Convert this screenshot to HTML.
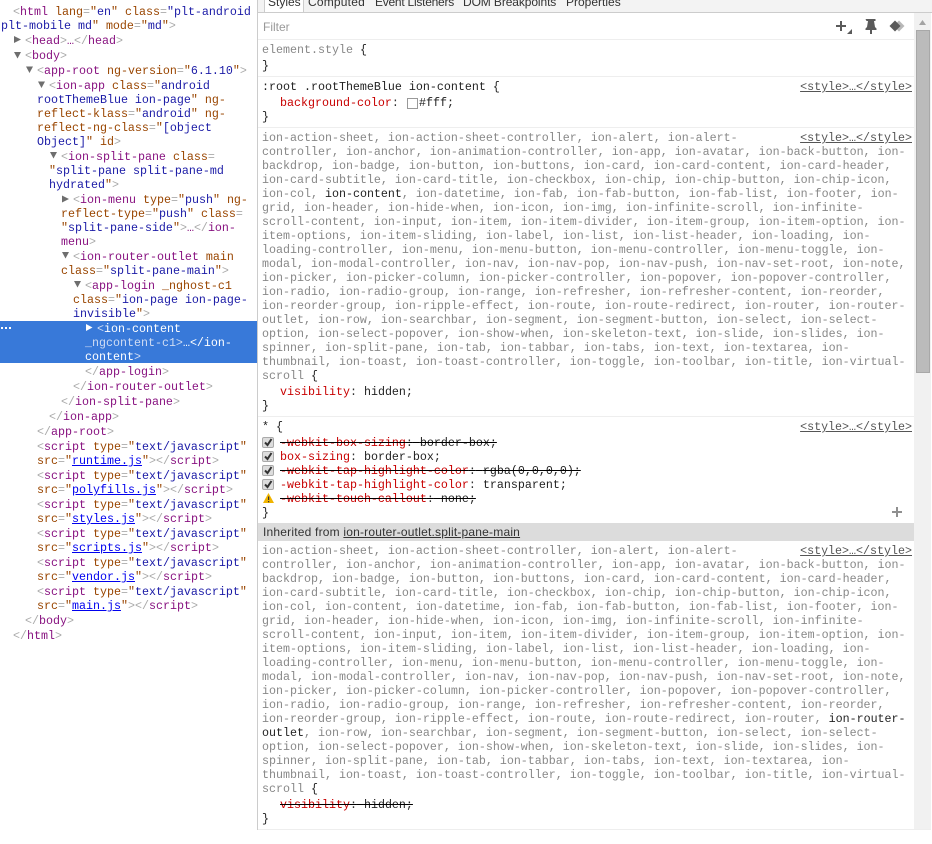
<!DOCTYPE html>
<html lang="en">
<head>
<meta charset="utf-8">
<title>DevTools</title>
<style>
html,body{margin:0;padding:0;background:#fff;}
#r{position:relative;width:932px;height:844px;overflow:hidden;background:#fff;font-family:"Liberation Mono",monospace;font-size:11.667px;line-height:14px;color:#222;}
.l{position:absolute;white-space:pre;height:14px;margin-top:1px;}
.b{position:absolute;}
.t{color:#881280}.g{color:#aaa}.a{color:#994500}.v{color:#1a1aa6}.u{color:#00e;text-decoration:underline}
.s{color:#888}.k{color:#222}.p{color:#c80000}.c{color:#333}
.x{text-decoration:line-through;text-decoration-color:#000}
.src{position:absolute;right:20px;color:#555;text-decoration:underline;white-space:pre;height:14px;margin-top:1px;}
.w,.w .t,.w .g,.w .a,.w .v{color:#fff}
.w .g{color:#cfdcf3}
.tab{position:absolute;top:-6px;font:12px/16px "Liberation Sans",sans-serif;color:#333;white-space:pre;}
.cb{position:absolute;left:262px;width:10px;height:9px;border:1px solid #aaa;border-radius:2px;background:#ddd;}
svg{position:absolute;overflow:visible;}
</style>
</head>
<body>
<div id="r">
<!-- panes -->
<div class="b" style="left:257px;top:0;width:1px;height:830px;background:#ccc"></div>
<div class="b" style="left:0;top:321px;width:257px;height:42px;background:#3879d9"></div>
<!-- tab strip -->
<div class="b" style="left:258px;top:0;width:674px;height:12px;background:#f3f3f3"></div>
<div class="b" style="left:258px;top:12px;width:674px;height:1px;background:#ccc"></div>
<div class="b" style="left:264px;top:0;width:38px;height:12px;background:#fff;border-left:1px solid #ccc;border-right:1px solid #ccc"></div>
<div class="tab" style="left:268px">Styles</div>
<div class="tab" style="left:308px;letter-spacing:.2px">Computed</div>
<div class="tab" style="left:375px;letter-spacing:-.25px">Event Listeners</div>
<div class="tab" style="left:463px;letter-spacing:-.1px">DOM Breakpoints</div>
<div class="tab" style="left:566px">Properties</div>
<!-- scrollbar -->
<div class="b" style="left:914px;top:13px;width:17px;height:816px;background:#f1f1f1"></div>
<div class="b" style="left:916px;top:30px;width:12px;height:341px;background:#bbb;border:1px solid #a8a8a8"></div>
<svg style="left:0;top:0" width="932" height="844"><path d="M919 25l3.500-5 3.500 5z" fill="#a3a3a3"/></svg>
<!-- separators -->
<div class="b" style="left:258px;top:39px;width:656px;height:1px;background:#eee"></div>
<div class="b" style="left:258px;top:76px;width:656px;height:1px;background:#eee"></div>
<div class="b" style="left:258px;top:127px;width:656px;height:1px;background:#eee"></div>
<div class="b" style="left:258px;top:416px;width:656px;height:1px;background:#eee"></div>
<div class="b" style="left:258px;top:523px;width:656px;height:18px;background:#dcdcdc"></div>
<div class="b" style="left:258px;top:829px;width:673px;height:1px;background:#eee"></div>
<!-- filter -->
<div class="b" style="left:263px;top:19px;font:12px/16px 'Liberation Sans',sans-serif;color:#999">Filter</div>
<svg style="left:0;top:0" width="932" height="844">
<path d="M836 25h10v2h-10zM840 21h2v10h-2z" fill="#5a5a5a"/>
<path d="M852 29v5h-5z" fill="#5a5a5a"/>
<path d="M865.500 19h10v2h-1.500l1 6 1.500 1.500v1.500h-4.500v4h-2v-4h-4.500v-1.500l1.500-1.500 1-6h-1.500z" fill="#5a5a5a"/>
<path d="M899 20.500l5.500 5.500-5.500 5.500-5.500-5.500z" fill="#b8b8b8"/>
<path d="M895 20.500l5.500 5.500-5.500 5.500-5.500-5.500z" fill="#5a5a5a"/>
<path d="M892 511h10v2h-10zM896 507h2v10h-2z" fill="#8f8f8f"/>
<path d="M268.500 493l5.500 10h-11z" fill="#f0b400"/>
<path d="M268 496.500h1.200v3.500h-1.200zM268 501h1.200v1.200h-1.200z" fill="#333"/>
</svg>
<!-- DOM tree arrows -->
<svg style="left:0;top:0" width="260" height="640">
<g fill="#6e6e6e">
<path d="M14 36l7 3.500-7 3.500z"/>
<path d="M14 52h7l-3.500 6.500z"/>
<path d="M26 66.500h7l-3.500 6.500z"/>
<path d="M38 81.500h7l-3.500 6.500z"/>
<path d="M50 152h7l-3.500 6.500z"/>
<path d="M62 195.500l7 3.500-7 3.500z"/>
<path d="M62 252h7l-3.500 6.500z"/>
<path d="M74 281h7l-3.500 6.500z"/>
</g>
<path d="M86 324l6.500 3.500-6.500 3.500z" fill="#fff"/>
<path d="M1 327h2v2h-2zM5 327h2v2h-2zM9 327h2v2h-2z" fill="#fff"/>
</svg>
<!-- DOM tree -->
<div class="l" style="left:13px;top:4px"><span class="g">&lt;</span><span class="t">html</span> <span class="a">lang</span><span class="g">=</span><span class="v"><span class="a">"</span>en<span class="a">"</span></span> <span class="a">class</span><span class="g">=</span><span class="v">"plt-android</span></div>
<div class="l" style="left:1px;top:18px"><span class="v">plt-mobile md</span><span class="a">"</span> <span class="a">mode</span><span class="g">=</span><span class="a">"</span><span class="v">md</span><span class="a">"</span><span class="g">&gt;</span></div>
<div class="l" style="left:25px;top:33px"><span class="g">&lt;</span><span class="t">head</span><span class="g">&gt;</span><span class="t">…</span><span class="g">&lt;/</span><span class="t">head</span><span class="g">&gt;</span></div>
<div class="l" style="left:25px;top:48px"><span class="g">&lt;</span><span class="t">body</span><span class="g">&gt;</span></div>
<div class="l" style="left:37px;top:63px"><span class="g">&lt;</span><span class="t">app-root</span> <span class="a">ng-version</span><span class="g">=</span><span class="a">"</span><span class="v">6.1.10</span><span class="a">"</span><span class="g">&gt;</span></div>
<div class="l" style="left:49px;top:78px"><span class="g">&lt;</span><span class="t">ion-app</span> <span class="a">class</span><span class="g">=</span><span class="a">"</span><span class="v">android</span></div>
<div class="l" style="left:37px;top:92px"><span class="v">rootThemeBlue ion-page</span><span class="a">"</span> <span class="a">ng-</span></div>
<div class="l" style="left:37px;top:106px"><span class="a">reflect-klass</span><span class="g">=</span><span class="a">"</span><span class="v">android</span><span class="a">"</span> <span class="a">ng-</span></div>
<div class="l" style="left:37px;top:120px"><span class="a">reflect-ng-class</span><span class="g">=</span><span class="a">"</span><span class="v">[object</span></div>
<div class="l" style="left:37px;top:134px"><span class="v">Object]</span><span class="a">"</span> <span class="a">id</span><span class="g">&gt;</span></div>
<div class="l" style="left:61px;top:149px"><span class="g">&lt;</span><span class="t">ion-split-pane</span> <span class="a">class</span><span class="g">=</span></div>
<div class="l" style="left:49px;top:163px"><span class="a">"</span><span class="v">split-pane split-pane-md</span></div>
<div class="l" style="left:49px;top:177px"><span class="v">hydrated</span><span class="a">"</span><span class="g">&gt;</span></div>
<div class="l" style="left:73px;top:192px"><span class="g">&lt;</span><span class="t">ion-menu</span> <span class="a">type</span><span class="g">=</span><span class="a">"</span><span class="v">push</span><span class="a">"</span> <span class="a">ng-</span></div>
<div class="l" style="left:61px;top:206px"><span class="a">reflect-type</span><span class="g">=</span><span class="a">"</span><span class="v">push</span><span class="a">"</span> <span class="a">class</span><span class="g">=</span></div>
<div class="l" style="left:61px;top:220px"><span class="a">"</span><span class="v">split-pane-side</span><span class="a">"</span><span class="g">&gt;</span><span class="t">…</span><span class="g">&lt;/</span><span class="t">ion-</span></div>
<div class="l" style="left:61px;top:234px"><span class="t">menu</span><span class="g">&gt;</span></div>
<div class="l" style="left:73px;top:249px"><span class="g">&lt;</span><span class="t">ion-router-outlet</span> <span class="a">main</span></div>
<div class="l" style="left:61px;top:263px"><span class="a">class</span><span class="g">=</span><span class="a">"</span><span class="v">split-pane-main</span><span class="a">"</span><span class="g">&gt;</span></div>
<div class="l" style="left:85px;top:278px"><span class="g">&lt;</span><span class="t">app-login</span> <span class="a">_nghost-c1</span></div>
<div class="l" style="left:73px;top:292px"><span class="a">class</span><span class="g">=</span><span class="a">"</span><span class="v">ion-page ion-page-</span></div>
<div class="l" style="left:73px;top:306px"><span class="v">invisible</span><span class="a">"</span><span class="g">&gt;</span></div>
<div class="l w" style="left:97px;top:321px"><span class="g">&lt;</span><span class="t">ion-content</span></div>
<div class="l w" style="left:85px;top:335px"><span class="g">_ngcontent-c1&gt;</span><span class="t">…</span><span class="t">&lt;/ion-</span></div>
<div class="l w" style="left:85px;top:349px"><span class="t">content</span><span class="g">&gt;</span></div>
<div class="l" style="left:85px;top:364px"><span class="g">&lt;/</span><span class="t">app-login</span><span class="g">&gt;</span></div>
<div class="l" style="left:73px;top:379px"><span class="g">&lt;/</span><span class="t">ion-router-outlet</span><span class="g">&gt;</span></div>
<div class="l" style="left:61px;top:394px"><span class="g">&lt;/</span><span class="t">ion-split-pane</span><span class="g">&gt;</span></div>
<div class="l" style="left:49px;top:409px"><span class="g">&lt;/</span><span class="t">ion-app</span><span class="g">&gt;</span></div>
<div class="l" style="left:37px;top:424px"><span class="g">&lt;/</span><span class="t">app-root</span><span class="g">&gt;</span></div>
<div class="l" style="left:37px;top:439px"><span class="g">&lt;</span><span class="t">script</span> <span class="a">type</span><span class="g">=</span><span class="a">"</span><span class="v">text/javascript</span><span class="a">"</span></div>
<div class="l" style="left:37px;top:453px"><span class="a">src</span><span class="g">=</span><span class="a">"</span><span class="u">runtime.js</span><span class="a">"</span><span class="g">&gt;&lt;/</span><span class="t">script</span><span class="g">&gt;</span></div>
<div class="l" style="left:37px;top:468px"><span class="g">&lt;</span><span class="t">script</span> <span class="a">type</span><span class="g">=</span><span class="a">"</span><span class="v">text/javascript</span><span class="a">"</span></div>
<div class="l" style="left:37px;top:482px"><span class="a">src</span><span class="g">=</span><span class="a">"</span><span class="u">polyfills.js</span><span class="a">"</span><span class="g">&gt;&lt;/</span><span class="t">script</span><span class="g">&gt;</span></div>
<div class="l" style="left:37px;top:497px"><span class="g">&lt;</span><span class="t">script</span> <span class="a">type</span><span class="g">=</span><span class="a">"</span><span class="v">text/javascript</span><span class="a">"</span></div>
<div class="l" style="left:37px;top:511px"><span class="a">src</span><span class="g">=</span><span class="a">"</span><span class="u">styles.js</span><span class="a">"</span><span class="g">&gt;&lt;/</span><span class="t">script</span><span class="g">&gt;</span></div>
<div class="l" style="left:37px;top:526px"><span class="g">&lt;</span><span class="t">script</span> <span class="a">type</span><span class="g">=</span><span class="a">"</span><span class="v">text/javascript</span><span class="a">"</span></div>
<div class="l" style="left:37px;top:540px"><span class="a">src</span><span class="g">=</span><span class="a">"</span><span class="u">scripts.js</span><span class="a">"</span><span class="g">&gt;&lt;/</span><span class="t">script</span><span class="g">&gt;</span></div>
<div class="l" style="left:37px;top:555px"><span class="g">&lt;</span><span class="t">script</span> <span class="a">type</span><span class="g">=</span><span class="a">"</span><span class="v">text/javascript</span><span class="a">"</span></div>
<div class="l" style="left:37px;top:569px"><span class="a">src</span><span class="g">=</span><span class="a">"</span><span class="u">vendor.js</span><span class="a">"</span><span class="g">&gt;&lt;/</span><span class="t">script</span><span class="g">&gt;</span></div>
<div class="l" style="left:37px;top:584px"><span class="g">&lt;</span><span class="t">script</span> <span class="a">type</span><span class="g">=</span><span class="a">"</span><span class="v">text/javascript</span><span class="a">"</span></div>
<div class="l" style="left:37px;top:598px"><span class="a">src</span><span class="g">=</span><span class="a">"</span><span class="u">main.js</span><span class="a">"</span><span class="g">&gt;&lt;/</span><span class="t">script</span><span class="g">&gt;</span></div>
<div class="l" style="left:25px;top:613px"><span class="g">&lt;/</span><span class="t">body</span><span class="g">&gt;</span></div>
<div class="l" style="left:13px;top:628px"><span class="g">&lt;/</span><span class="t">html</span><span class="g">&gt;</span></div>
<!-- Styles: element.style -->
<div class="l s" style="left:262px;top:42px">element.style <span class="k">{</span></div>
<div class="l k" style="left:262px;top:58px">}</div>
<!-- :root rule -->
<div class="l k" style="left:262px;top:79px">:root .rootThemeBlue ion-content {</div>
<div class="src" style="top:79px">&lt;style&gt;…&lt;/style&gt;</div>
<div class="l" style="left:280px;top:95px"><span class="p">background-color</span><span class="c">:</span></div>
<div class="b" style="left:407px;top:98px;width:9px;height:9px;border:1px solid #999;background:#fff"></div>
<div class="l k" style="left:419px;top:95px">#fff;</div>
<div class="l k" style="left:262px;top:109px">}</div>
<!-- rule 1 -->
<div class="src" style="top:130px">&lt;style&gt;…&lt;/style&gt;</div>
<div class="l s" style="left:262px;top:130px">ion-action-sheet, ion-action-sheet-controller, ion-alert, ion-alert-</div>
<div class="l s" style="left:262px;top:144px">controller, ion-anchor, ion-animation-controller, ion-app, ion-avatar, ion-back-button, ion-</div>
<div class="l s" style="left:262px;top:158px">backdrop, ion-badge, ion-button, ion-buttons, ion-card, ion-card-content, ion-card-header,</div>
<div class="l s" style="left:262px;top:172px">ion-card-subtitle, ion-card-title, ion-checkbox, ion-chip, ion-chip-button, ion-chip-icon,</div>
<div class="l s" style="left:262px;top:186px">ion-col, <span class="k">ion-content</span>, ion-datetime, ion-fab, ion-fab-button, ion-fab-list, ion-footer, ion-</div>
<div class="l s" style="left:262px;top:200px">grid, ion-header, ion-hide-when, ion-icon, ion-img, ion-infinite-scroll, ion-infinite-</div>
<div class="l s" style="left:262px;top:214px">scroll-content, ion-input, ion-item, ion-item-divider, ion-item-group, ion-item-option, ion-</div>
<div class="l s" style="left:262px;top:228px">item-options, ion-item-sliding, ion-label, ion-list, ion-list-header, ion-loading, ion-</div>
<div class="l s" style="left:262px;top:242px">loading-controller, ion-menu, ion-menu-button, ion-menu-controller, ion-menu-toggle, ion-</div>
<div class="l s" style="left:262px;top:256px">modal, ion-modal-controller, ion-nav, ion-nav-pop, ion-nav-push, ion-nav-set-root, ion-note,</div>
<div class="l s" style="left:262px;top:270px">ion-picker, ion-picker-column, ion-picker-controller, ion-popover, ion-popover-controller,</div>
<div class="l s" style="left:262px;top:284px">ion-radio, ion-radio-group, ion-range, ion-refresher, ion-refresher-content, ion-reorder,</div>
<div class="l s" style="left:262px;top:298px">ion-reorder-group, ion-ripple-effect, ion-route, ion-route-redirect, ion-router, ion-router-</div>
<div class="l s" style="left:262px;top:312px">outlet, ion-row, ion-searchbar, ion-segment, ion-segment-button, ion-select, ion-select-</div>
<div class="l s" style="left:262px;top:326px">option, ion-select-popover, ion-show-when, ion-skeleton-text, ion-slide, ion-slides, ion-</div>
<div class="l s" style="left:262px;top:340px">spinner, ion-split-pane, ion-tab, ion-tabbar, ion-tabs, ion-text, ion-textarea, ion-</div>
<div class="l s" style="left:262px;top:354px">thumbnail, ion-toast, ion-toast-controller, ion-toggle, ion-toolbar, ion-title, ion-virtual-</div>
<div class="l s" style="left:262px;top:368px">scroll <span class="k">{</span></div>
<div class="l" style="left:280px;top:384px"><span class="p">visibility</span><span class="c">:</span> <span class="k">hidden;</span></div>
<div class="l k" style="left:262px;top:398px">}</div>
<!-- * rule -->
<div class="l k" style="left:262px;top:419px">* {</div>
<div class="src" style="top:419px">&lt;style&gt;…&lt;/style&gt;</div>
<div class="cb" style="top:437px"></div>
<div class="cb" style="top:451px"></div>
<div class="cb" style="top:465px"></div>
<div class="cb" style="top:479px"></div>
<svg style="left:0;top:0" width="932" height="844"><g fill="none" stroke="#333" stroke-width="2"><path d="M265 442.500l2.500 2.500 4-6"/><path d="M265 456.500l2.500 2.500 4-6"/><path d="M265 470.500l2.500 2.500 4-6"/><path d="M265 484.500l2.500 2.500 4-6"/></g></svg>
<div class="l x" style="left:280px;top:435px"><span class="p">-webkit-box-sizing</span><span class="c">:</span> <span class="k">border-box;</span></div>
<div class="l" style="left:280px;top:449px"><span class="p">box-sizing</span><span class="c">:</span> <span class="k">border-box;</span></div>
<div class="l x" style="left:280px;top:463px"><span class="p">-webkit-tap-highlight-color</span><span class="c">:</span> <span class="k">rgba(0,0,0,0);</span></div>
<div class="l" style="left:280px;top:477px"><span class="p">-webkit-tap-highlight-color</span><span class="c">:</span> <span class="k">transparent;</span></div>
<div class="l x" style="left:280px;top:491px"><span class="p">-webkit-touch-callout</span><span class="c">:</span> <span class="k">none;</span></div>
<div class="l k" style="left:262px;top:505px">}</div>
<!-- inherited -->
<div class="b" style="left:263px;top:524px;font:12px/16px 'Liberation Sans',sans-serif;color:#333;white-space:pre;letter-spacing:.2px">Inherited from <span style="text-decoration:underline">ion-router-outlet.split-pane-main</span></div>
<!-- rule 2 -->
<div class="src" style="top:543px">&lt;style&gt;…&lt;/style&gt;</div>
<div class="l s" style="left:262px;top:543px">ion-action-sheet, ion-action-sheet-controller, ion-alert, ion-alert-</div>
<div class="l s" style="left:262px;top:557px">controller, ion-anchor, ion-animation-controller, ion-app, ion-avatar, ion-back-button, ion-</div>
<div class="l s" style="left:262px;top:571px">backdrop, ion-badge, ion-button, ion-buttons, ion-card, ion-card-content, ion-card-header,</div>
<div class="l s" style="left:262px;top:585px">ion-card-subtitle, ion-card-title, ion-checkbox, ion-chip, ion-chip-button, ion-chip-icon,</div>
<div class="l s" style="left:262px;top:599px">ion-col, ion-content, ion-datetime, ion-fab, ion-fab-button, ion-fab-list, ion-footer, ion-</div>
<div class="l s" style="left:262px;top:613px">grid, ion-header, ion-hide-when, ion-icon, ion-img, ion-infinite-scroll, ion-infinite-</div>
<div class="l s" style="left:262px;top:627px">scroll-content, ion-input, ion-item, ion-item-divider, ion-item-group, ion-item-option, ion-</div>
<div class="l s" style="left:262px;top:641px">item-options, ion-item-sliding, ion-label, ion-list, ion-list-header, ion-loading, ion-</div>
<div class="l s" style="left:262px;top:655px">loading-controller, ion-menu, ion-menu-button, ion-menu-controller, ion-menu-toggle, ion-</div>
<div class="l s" style="left:262px;top:669px">modal, ion-modal-controller, ion-nav, ion-nav-pop, ion-nav-push, ion-nav-set-root, ion-note,</div>
<div class="l s" style="left:262px;top:683px">ion-picker, ion-picker-column, ion-picker-controller, ion-popover, ion-popover-controller,</div>
<div class="l s" style="left:262px;top:697px">ion-radio, ion-radio-group, ion-range, ion-refresher, ion-refresher-content, ion-reorder,</div>
<div class="l s" style="left:262px;top:711px">ion-reorder-group, ion-ripple-effect, ion-route, ion-route-redirect, ion-router, <span class="k">ion-router-</span></div>
<div class="l s" style="left:262px;top:725px"><span class="k">outlet</span>, ion-row, ion-searchbar, ion-segment, ion-segment-button, ion-select, ion-select-</div>
<div class="l s" style="left:262px;top:739px">option, ion-select-popover, ion-show-when, ion-skeleton-text, ion-slide, ion-slides, ion-</div>
<div class="l s" style="left:262px;top:753px">spinner, ion-split-pane, ion-tab, ion-tabbar, ion-tabs, ion-text, ion-textarea, ion-</div>
<div class="l s" style="left:262px;top:767px">thumbnail, ion-toast, ion-toast-controller, ion-toggle, ion-toolbar, ion-title, ion-virtual-</div>
<div class="l s" style="left:262px;top:781px">scroll <span class="k">{</span></div>
<div class="l x" style="left:280px;top:797px"><span class="p">visibility</span><span class="c">:</span> <span class="k">hidden;</span></div>
<div class="l k" style="left:262px;top:811px">}</div>
</div>
</body>
</html>
